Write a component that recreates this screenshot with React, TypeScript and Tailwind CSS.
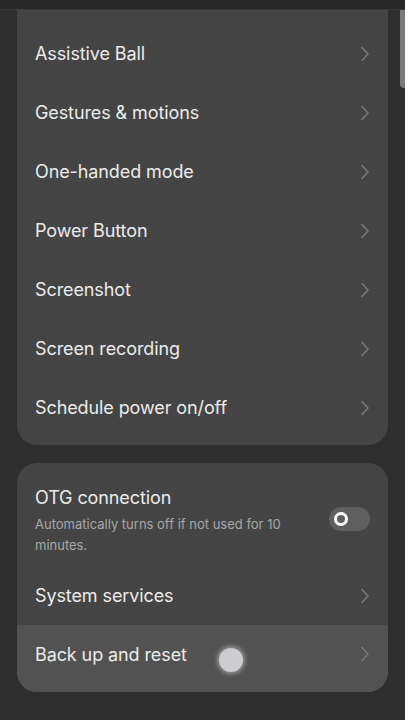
import { ReactNode } from 'react';

const items = [
  'Assistive Ball',
  'Gestures & motions',
  'One-handed mode',
  'Power Button',
  'Screenshot',
  'Screen recording',
  'Schedule power on/off',
];

function Chevron() {
  return (
    <svg width="10" height="16" viewBox="0 0 10 16" className="shrink-0">
      <path d="M2 1.5 L8 8 L2 14.5" fill="none" stroke="#7a7a7a" strokeWidth="1.5" strokeLinecap="round" strokeLinejoin="round" />
    </svg>
  );
}

function Row({ label, className = '', children }: { label: string; className?: string; children?: ReactNode }) {
  return (
    <div className={`relative flex items-center justify-between pl-[18px] pr-[18px] ${className}`}>
      <span className="text-[18px] text-[#ececec] tracking-[-0.1px]">{label}</span>
      {children}
      <Chevron />
    </div>
  );
}

export default function App() {
  return (
    <div
      className="relative w-[405px] h-[720px] overflow-hidden bg-[#2e2e2e]"
      style={{ fontFamily: 'Inter, "Noto Sans", sans-serif' }}
    >
      <div className="h-[10px] bg-[#272727] border-b border-[#3a3a3a]" />

      {/* scrollbar */}
      <div className="absolute right-0 top-[10px] w-[5px] h-[78px] rounded-bl-[4px] bg-[#7a7a7a]" />

      <div className="mx-[17px] bg-[#444444] rounded-b-[20px] pt-[14px] pb-[8px]">
        {items.map((t) => (
          <Row key={t} label={t} className="h-[59px]" />
        ))}
      </div>

      <div className="mx-[17px] mt-[18px] bg-[#444444] rounded-[20px] overflow-hidden">
        <div className="flex items-start justify-between pl-[18px] pr-[18px] pt-[23px] pb-[10px]">
          <div className="flex flex-col">
            <span className="text-[18px] text-[#ececec] leading-[24px] tracking-[-0.1px]">OTG connection</span>
            <span className="text-[13px] text-[#a8a8a8] leading-[21px] mt-[4px] w-[290px]">
              Automatically turns off if not used for 10 minutes.
            </span>
          </div>
          <div className="mt-[21px] w-[41px] h-[24px] rounded-full bg-[#5f5f5f] flex items-center pl-[5px]">
            <div className="w-[14px] h-[14px] rounded-full border-[3px] border-white" />
          </div>
        </div>
        <Row label="System services" className="h-[59px]" />
        <Row label="Back up and reset" className="h-[67px] bg-[#525252] pb-[9px]">
          <div className="absolute left-[202px] top-[23px] w-[24px] h-[24px] rounded-full bg-[#cdcdcf] shadow-[0_0_4px_2px_rgba(230,230,235,0.45)]" />
        </Row>
      </div>
    </div>
  );
}
